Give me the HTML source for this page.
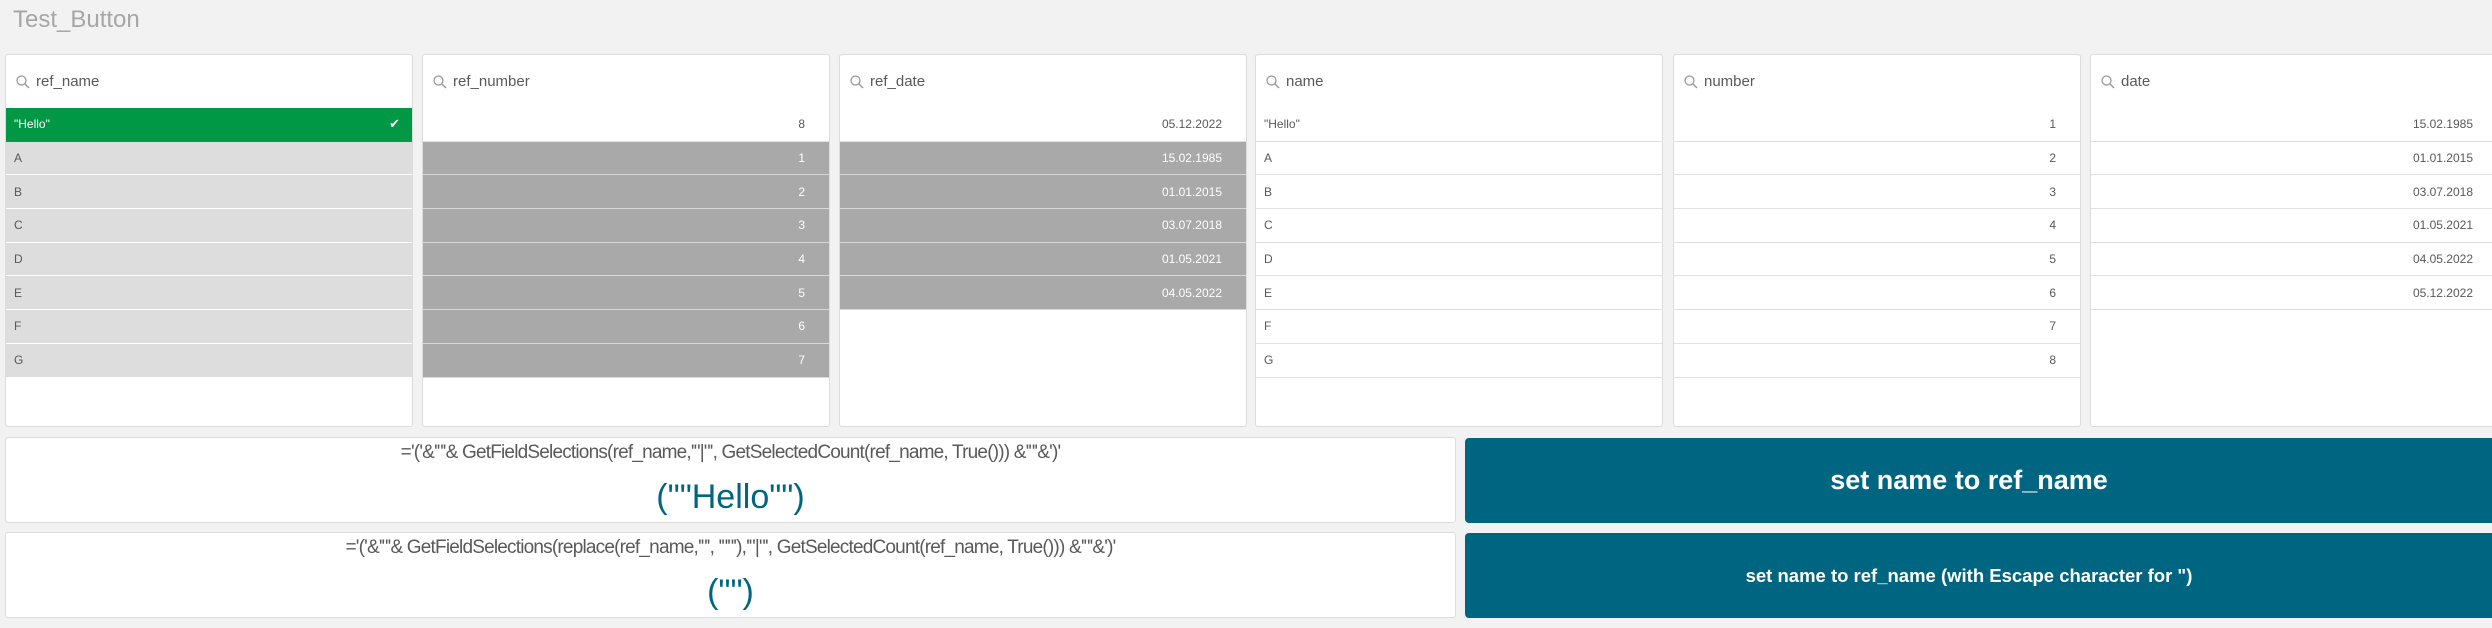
<!DOCTYPE html>
<html><head><meta charset="utf-8"><style>
*{box-sizing:border-box;margin:0;padding:0}
body{width:2492px;height:628px;background:#f2f2f2;font-family:"Liberation Sans",sans-serif;position:relative;overflow:hidden;color:#595959}
.title{position:absolute;left:13px;top:6px;font-size:24px;color:#a6a6a6}
.panel{position:absolute;top:54px;height:373px;background:#fff;border:1px solid #dcdcdc;border-radius:3px;overflow:hidden}
.hdr{height:53px;display:flex;align-items:center;padding-left:10px;font-size:15px;color:#595959}
.hdr svg{margin-right:6px}
.row{height:33.7px;border-bottom:1px solid #e0e0e0;display:flex;align-items:center;padding:0 24px 0 8px;font-size:12px;position:relative}
.r{justify-content:flex-end}
.sel{background:#009845;color:#fff;border-bottom-color:#00a04a}
.alt{background:#a9a9a9;color:#fff;border-bottom-color:#d8d8d8}
.exc{background:#dddddd;border-bottom-color:#fff}
.box{position:absolute;left:5px;width:1451px;height:86px;background:#fff;border:1px solid #dcdcdc;border-radius:3px;text-align:center}
.f{font-size:19px;color:#595959;letter-spacing:-0.8px;position:absolute;width:100%}
.v{font-size:34px;color:#006580;position:absolute;width:100%}
.btn{position:absolute;left:1465px;width:1040px;height:85px;background:#006580;border-radius:4px;color:#fff;font-weight:bold;display:flex;align-items:center;justify-content:center}
</style></head><body>
<div class="title">Test_Button</div>

<div class="panel" style="left:5px;width:408px">
<div class="hdr"><svg width="14" height="14" viewBox="0 0 14 14"><circle cx="5.5" cy="5.5" r="4.5" fill="none" stroke="#999" stroke-width="1.3"/><line x1="9" y1="9" x2="13" y2="13" stroke="#999" stroke-width="1.5"/></svg>ref_name</div>
<div class="row sel">"Hello"<span style="position:absolute;right:12px;font-size:13px">✔</span></div>
<div class="row exc">A</div><div class="row exc">B</div><div class="row exc">C</div><div class="row exc">D</div><div class="row exc">E</div><div class="row exc">F</div><div class="row exc">G</div>
</div>

<div class="panel" style="left:422px;width:408px">
<div class="hdr"><svg width="14" height="14" viewBox="0 0 14 14"><circle cx="5.5" cy="5.5" r="4.5" fill="none" stroke="#999" stroke-width="1.3"/><line x1="9" y1="9" x2="13" y2="13" stroke="#999" stroke-width="1.5"/></svg>ref_number</div>
<div class="row r">8</div>
<div class="row r alt">1</div><div class="row r alt">2</div><div class="row r alt">3</div><div class="row r alt">4</div><div class="row r alt">5</div><div class="row r alt">6</div><div class="row r alt">7</div>
</div>

<div class="panel" style="left:839px;width:408px">
<div class="hdr"><svg width="14" height="14" viewBox="0 0 14 14"><circle cx="5.5" cy="5.5" r="4.5" fill="none" stroke="#999" stroke-width="1.3"/><line x1="9" y1="9" x2="13" y2="13" stroke="#999" stroke-width="1.5"/></svg>ref_date</div>
<div class="row r">05.12.2022</div>
<div class="row r alt">15.02.1985</div><div class="row r alt">01.01.2015</div><div class="row r alt">03.07.2018</div><div class="row r alt">01.05.2021</div><div class="row r alt">04.05.2022</div>
</div>

<div class="panel" style="left:1255px;width:408px">
<div class="hdr"><svg width="14" height="14" viewBox="0 0 14 14"><circle cx="5.5" cy="5.5" r="4.5" fill="none" stroke="#999" stroke-width="1.3"/><line x1="9" y1="9" x2="13" y2="13" stroke="#999" stroke-width="1.5"/></svg>name</div>
<div class="row">"Hello"</div><div class="row">A</div><div class="row">B</div><div class="row">C</div><div class="row">D</div><div class="row">E</div><div class="row">F</div><div class="row">G</div>
</div>

<div class="panel" style="left:1673px;width:408px">
<div class="hdr"><svg width="14" height="14" viewBox="0 0 14 14"><circle cx="5.5" cy="5.5" r="4.5" fill="none" stroke="#999" stroke-width="1.3"/><line x1="9" y1="9" x2="13" y2="13" stroke="#999" stroke-width="1.5"/></svg>number</div>
<div class="row r">1</div><div class="row r">2</div><div class="row r">3</div><div class="row r">4</div><div class="row r">5</div><div class="row r">6</div><div class="row r">7</div><div class="row r">8</div>
</div>

<div class="panel" style="left:2090px;width:420px">
<div class="hdr"><svg width="14" height="14" viewBox="0 0 14 14"><circle cx="5.5" cy="5.5" r="4.5" fill="none" stroke="#999" stroke-width="1.3"/><line x1="9" y1="9" x2="13" y2="13" stroke="#999" stroke-width="1.5"/></svg>date</div>
<div class="row r" style="padding-right:36px">15.02.1985</div><div class="row r" style="padding-right:36px">01.01.2015</div><div class="row r" style="padding-right:36px">03.07.2018</div><div class="row r" style="padding-right:36px">01.05.2021</div><div class="row r" style="padding-right:36px">04.05.2022</div><div class="row r" style="padding-right:36px">05.12.2022</div>
</div>

<div class="box" style="top:437px">
<div class="f" style="top:4px">='('&amp;'"'&amp; GetFieldSelections(ref_name,'"|"', GetSelectedCount(ref_name, True())) &amp;'"'&amp;')'</div>
<div class="v" style="top:40px">(""Hello"")</div>
</div>
<div class="box" style="top:532px">
<div class="f" style="top:4px">='('&amp;'"'&amp; GetFieldSelections(replace(ref_name,'"', '""'),'"|"', GetSelectedCount(ref_name, True())) &amp;'"'&amp;')'</div>
<div class="v" style="top:40px">("")</div>
</div>

<div class="btn" style="top:438px;font-size:27px"><span style="margin-right:32px">set name to ref_name</span></div>
<div class="btn" style="top:533px;font-size:18.5px"><span style="margin-right:32px">set name to ref_name (with Escape character for ")</span></div>
</body></html>
